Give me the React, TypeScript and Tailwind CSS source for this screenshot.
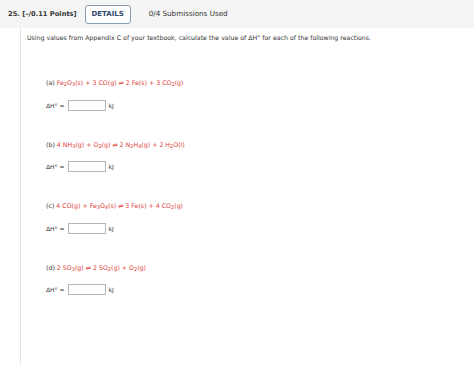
const red = "text-[#e0413b]";

function Sub({ children }: { children: React.ReactNode }) {
  return <sub className="text-[5px] leading-none">{children}</sub>;
}

function Answer() {
  return (
    <div className="flex h-[12px] items-center gap-[3px] text-[6px]">
      <span>ΔH° =</span>
      <span className="h-[11px] w-[38px] border border-[#b5b5b5] bg-white" />
      <span>kJ</span>
    </div>
  );
}

function Reaction({ label, children }: { label: string; children: React.ReactNode }) {
  return (
    <div className="flex h-[34px] flex-col gap-[10px]">
      <div className="h-[12px] text-[6.25px] leading-[12px] whitespace-nowrap">
        ({label}) <span className={red}>{children}</span>
      </div>
      <Answer />
    </div>
  );
}

export default function App() {
  return (
    <div className="h-[365px] w-[474px] overflow-hidden bg-white font-['DejaVu_Sans',Verdana,sans-serif] text-[#333]">
      <div className="flex h-[28px] items-center bg-[#f5f5f5] pl-[8px] text-[7px]">
        <span className="text-[6.7px] font-bold">25. [–/0.11 Points]</span>
        <span className="ml-[8px] flex h-[19px] w-[46px] items-center justify-center rounded-[3px] border border-[#8a9bb0] bg-white font-bold text-[#2e4a6b]">
          DETAILS
        </span>
        <span className="ml-[18px] text-[7.2px]">0/4 Submissions Used</span>
      </div>
      <div className="ml-[20px] h-[337px] border-l border-[#e3e3e3] pl-[6px] text-[6.25px]">
        <p className="pt-[5px] leading-[10px]">
          Using values from Appendix C of your textbook, calculate the value of ΔH° for each of the following reactions.
        </p>
        <div className="flex flex-col gap-[27.5px] pl-[19px] pt-[34px] text-[6px]">
          <Reaction label="a">
            Fe<Sub>2</Sub>O<Sub>3</Sub>(s) + 3 CO(g) ⇌ 2 Fe(s) + 3 CO<Sub>2</Sub>(g)
          </Reaction>
          <Reaction label="b">
            4 NH<Sub>3</Sub>(g) + O<Sub>2</Sub>(g) ⇌ 2 N<Sub>2</Sub>H<Sub>4</Sub>(g) + 2 H<Sub>2</Sub>O(l)
          </Reaction>
          <Reaction label="c">
            4 CO(g) + Fe<Sub>3</Sub>O<Sub>4</Sub>(s) ⇌ 3 Fe(s) + 4 CO<Sub>2</Sub>(g)
          </Reaction>
          <Reaction label="d">
            2 SO<Sub>3</Sub>(g) ⇌ 2 SO<Sub>2</Sub>(g) + O<Sub>2</Sub>(g)
          </Reaction>
        </div>
      </div>
    </div>
  );
}
